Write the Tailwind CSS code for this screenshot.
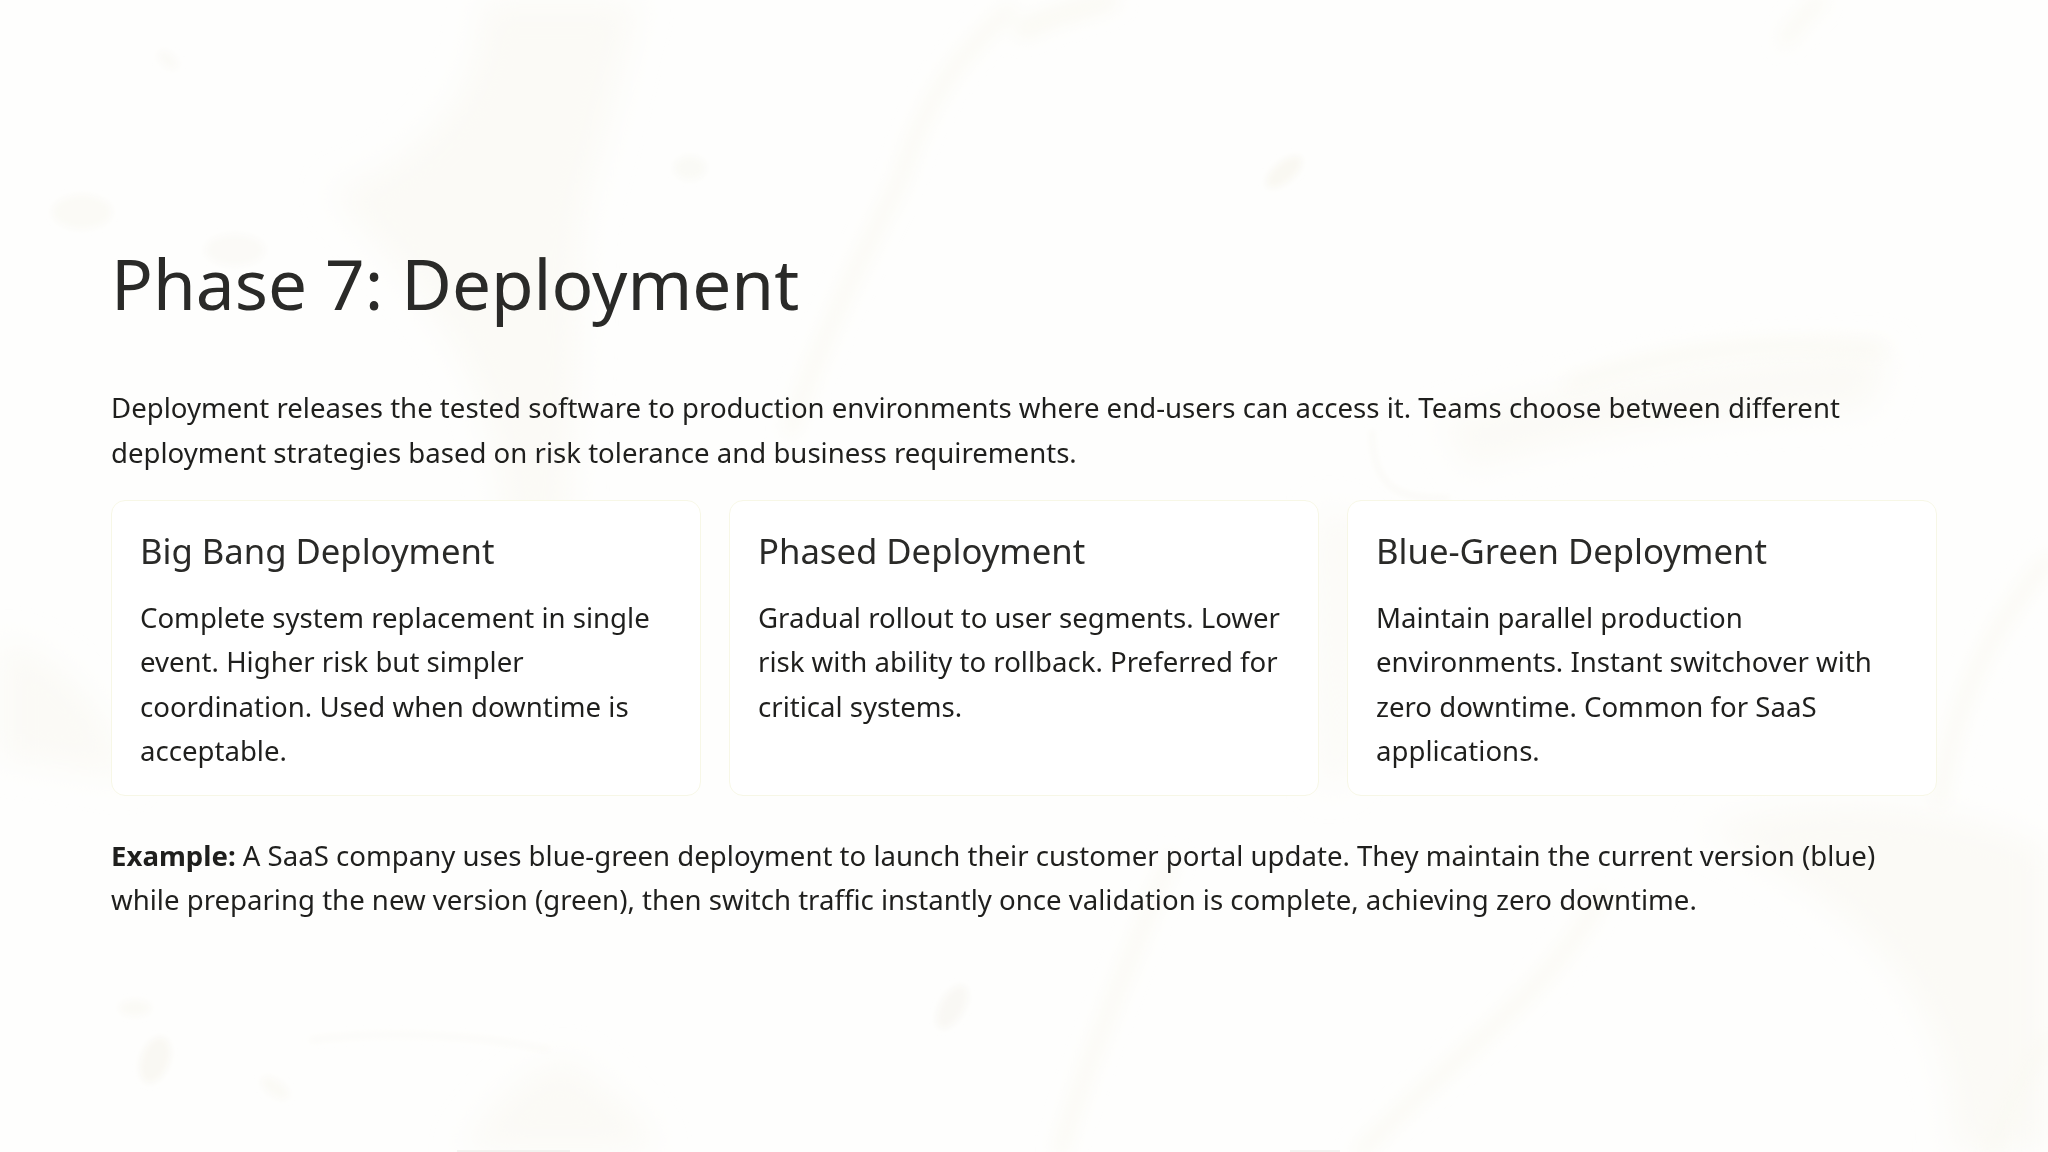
<!DOCTYPE html>
<html lang="en">
<head>
  <meta charset="UTF-8" />
  <meta name="viewport" content="width=device-width, initial-scale=1" />
  <title>Phase 7: Deployment</title>
  <script src="https://cdn.jsdelivr.net/npm/@tailwindcss/browser@4"></script>
</head>
<body class="relative w-[2048px] h-[1152px] overflow-hidden bg-[#fefefd] font-['Noto_Sans',sans-serif] text-[#1f1f1d]">

  <!-- marble background -->
  <svg class="absolute inset-0" width="2048" height="1152" viewBox="0 0 2048 1152" fill="none">
    <defs>
      <filter id="softer" x="-30%" y="-30%" width="160%" height="160%"><feGaussianBlur stdDeviation="16" /></filter>
      <filter id="soft" x="-30%" y="-30%" width="160%" height="160%"><feGaussianBlur stdDeviation="9" /></filter>
      <filter id="fine" x="-30%" y="-30%" width="160%" height="160%"><feGaussianBlur stdDeviation="3" /></filter>
    </defs>
    <g filter="url(#softer)" fill="#fbfaf6">
      <path d="M480 0 L640 0 C620 70 610 130 590 190 C575 240 585 320 575 420 C565 520 580 600 540 680 L470 760 C520 620 510 500 480 400 C440 300 360 230 330 190 C410 170 490 90 480 0Z" />
      <path d="M0 640 C50 650 110 700 130 780 C80 770 30 760 0 760Z" />
      <path d="M1440 420 C1560 390 1760 350 1890 350 L1870 410 C1740 410 1590 430 1470 470Z" />
      <path d="M1700 830 C1800 790 1960 800 2048 850 L2048 1152 L1950 1152 C1960 1040 1900 920 1700 830Z" />
      <path d="M460 1152 C500 1090 540 1060 570 1060 C610 1090 640 1110 660 1152Z" />
      <path d="M1320 510 L1360 520 L1350 780 L1322 790Z" />
    </g>
    <g filter="url(#soft)" stroke="#faf9f3" stroke-width="13" stroke-linecap="round" fill="none">
      <path d="M1010 10 C940 70 920 120 900 180 C860 260 820 340 790 430" />
      <path d="M1170 860 C1130 960 1090 1050 1060 1152" />
      <path d="M1360 1152 C1460 1050 1540 1000 1600 900" />
      <path d="M1570 385 C1680 345 1780 340 1880 350" />
      <path d="M2048 560 C1980 640 1950 720 1940 800" />
      <path d="M1820 0 C1805 15 1795 25 1785 40" />
      <path d="M1024 30 C1050 15 1080 10 1110 0" stroke-width="18" />
      <path d="M1990 1152 C2010 1100 2030 1060 2048 1040" />
    </g>
    <g filter="url(#fine)">
      <ellipse cx="82" cy="212" rx="30" ry="17" fill="#fbfaf6" />
      <ellipse cx="235" cy="250" rx="30" ry="16" fill="#fbfaf7" />
      <ellipse cx="155" cy="1060" rx="14" ry="24" fill="#f9f8f3" transform="rotate(20 155 1060)" />
      <ellipse cx="135" cy="1008" rx="16" ry="8" fill="#fbfaf6" />
      <ellipse cx="275" cy="1088" rx="16" ry="8" fill="#fbfaf6" transform="rotate(35 275 1088)" />
      <ellipse cx="952" cy="1007" rx="12" ry="24" fill="#f9f8f4" transform="rotate(30 952 1007)" />
      <ellipse cx="1284" cy="172" rx="22" ry="10" fill="#f9f8f2" transform="rotate(-40 1284 172)" />
      <ellipse cx="690" cy="168" rx="16" ry="12" fill="#fafaf6" />
      <ellipse cx="168" cy="60" rx="12" ry="7" fill="#fbfaf7" transform="rotate(40 168 60)" />
      <path d="M1372 430 C1372 490 1400 500 1450 498" stroke="#f9f8f3" stroke-width="3" />
      <path d="M310 1040 C390 1030 480 1035 550 1050" stroke="#fbfaf6" stroke-width="4" />
    </g>
    <path d="M457 1151 H570 M1290 1151 H1340" stroke="#e8e8e4" stroke-width="1" />
  </svg>

  <main class="relative h-full flex flex-col justify-center pl-[111px] pr-[111px] pb-[1.3px]">
    <h1 class="text-[69.33px] leading-[111px] font-normal text-[#2a2a28] mb-[47px]">Phase 7: Deployment</h1>
    <p class="text-[27.58px] leading-[44.37px] mb-[24.8px]">Deployment releases the tested software to production environments where end-users can access it. Teams choose between different deployment strategies based on risk tolerance and business requirements.</p>

    <div class="grid grid-cols-3 gap-[28px] mb-[37.8px]">
      <div class="bg-white border border-[#f7f7e6] rounded-[14px] px-[28px] pt-[22.6px] pb-[21.4px]">
        <h3 class="text-[34.67px] leading-[55.47px] font-normal text-[#2a2a28] mb-[17.3px]">Big Bang Deployment</h3>
        <p class="text-[27.58px] leading-[44.37px]">Complete system replacement in single event. Higher risk but simpler coordination. Used when downtime is acceptable.</p>
      </div>
      <div class="bg-white border border-[#f7f7e6] rounded-[14px] px-[28px] pt-[22.6px] pb-[21.4px]">
        <h3 class="text-[34.67px] leading-[55.47px] font-normal text-[#2a2a28] mb-[17.3px]">Phased Deployment</h3>
        <p class="text-[27.58px] leading-[44.37px]">Gradual rollout to user segments. Lower risk with ability to rollback. Preferred for critical systems.</p>
      </div>
      <div class="bg-white border border-[#f7f7e6] rounded-[14px] px-[28px] pt-[22.6px] pb-[21.4px]">
        <h3 class="text-[34.67px] leading-[55.47px] font-normal text-[#2a2a28] mb-[17.3px]">Blue-Green Deployment</h3>
        <p class="text-[27.58px] leading-[44.37px]">Maintain parallel production environments. Instant switchover with zero downtime. Common for SaaS applications.</p>
      </div>
    </div>

    <p class="text-[27.58px] leading-[44.37px]"><strong class="font-bold">Example:</strong> A SaaS company uses blue-green deployment to launch their customer portal update. They maintain the current version (blue) while preparing the new version (green), then switch traffic instantly once validation is complete, achieving zero downtime.</p>
  </main>
</body>
</html>
